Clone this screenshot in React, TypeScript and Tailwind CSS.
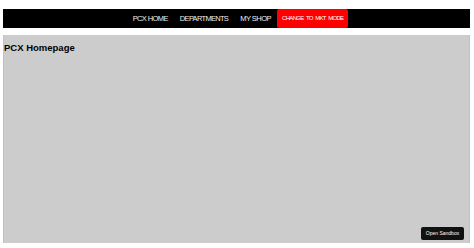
import React from 'react';

const App: React.FC = () => {
  return (
    <div className="w-[474px] h-[248px] bg-white relative" style={{ fontFamily: '"Liberation Sans", Arial, sans-serif' }}>
      <div className="pt-[9px] pl-[3px] pr-[4px]">
        {/* Top nav */}
        <nav className="h-[19px] bg-black flex items-stretch justify-center pl-[2px]">
          <a className="px-[6px] flex items-center text-[#eeeeee] text-[7.5px] tracking-[-0.6px] uppercase">PCX Home</a>
          <a className="px-[6px] flex items-center text-[#eeeeee] text-[7.5px] tracking-[-0.7px] uppercase">Departments</a>
          <a className="px-[6px] flex items-center text-[#eeeeee] text-[7.5px] tracking-[-0.5px] uppercase">My Shop</a>
          <button className="px-[5px] flex items-center bg-[#ff0000] text-white text-[6px] tracking-[-0.7px] [word-spacing:1.5px] uppercase rounded-[2px]">
            Change to MKT Mode
          </button>
        </nav>

        {/* Page body */}
        <div className="mt-[7px] h-[208px] bg-[#cccccc] border-l border-r border-[#c2c2c2]">
          <h1 className="pt-[8px] text-[9.5px] font-bold text-black leading-none">PCX Homepage</h1>
        </div>
      </div>

      <button className="absolute left-[421px] top-[227px] w-[43px] h-[13px] bg-[#111111] text-white text-[5px] rounded-[2px] flex items-center justify-center">
        Open Sandbox
      </button>
    </div>
  );
};

export default App;
